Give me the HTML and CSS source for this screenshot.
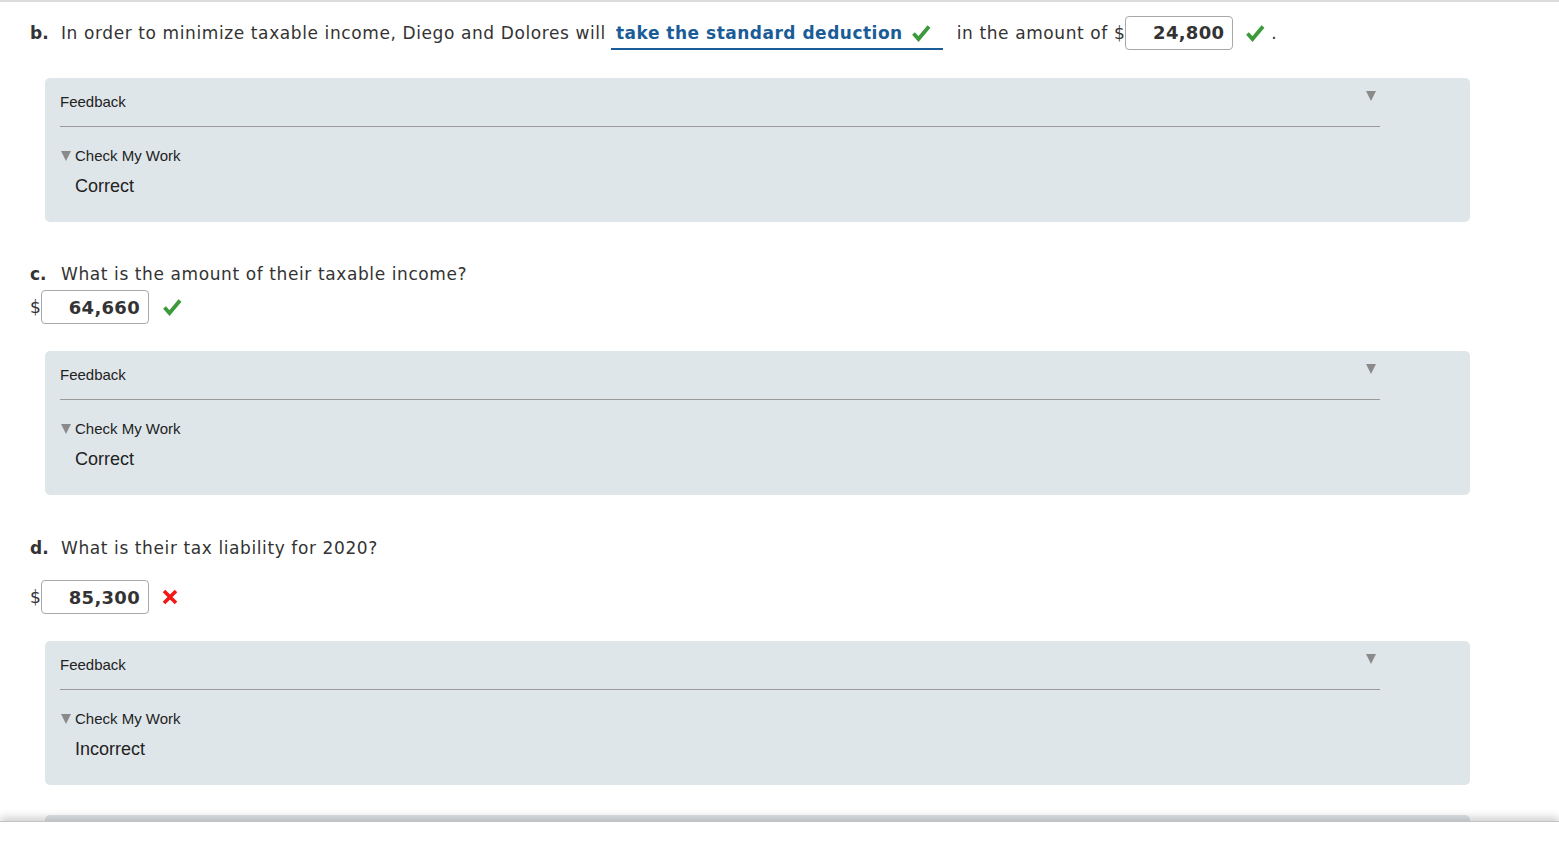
FILE: index.html
```html
<!DOCTYPE html>
<html>
<head>
<meta charset="utf-8">
<link rel="stylesheet" href="styles.css">
</head>
<body>
<div class="page">
  <div class="q q-b">
    <span class="lbl">b.</span><span class="qt">In order to minimize taxable income, Diego and Dolores will</span>
    <span class="select">take the standard deduction
      <svg class="chk" viewBox="0 0 20 20" width="20" height="20"><path d="M2.5 10.5 L7.5 16 L18 3.5" fill="none" stroke="#3d9a3c" stroke-width="3.8"/></svg>
    </span>
    <span class="qt after">in the amount of $</span><span class="inp">24,800</span>
    <svg class="chk mark" viewBox="0 0 20 20" width="20" height="20"><path d="M2.5 10.5 L7.5 16 L18 3.5" fill="none" stroke="#3d9a3c" stroke-width="3.8"/></svg><span class="dot">.</span>
  </div>

  <div class="panel">
    <div class="fb-head">Feedback<span class="tri-r"></span></div>
    <div class="cmw"><span class="tri"></span>Check My Work</div>
    <div class="res">Correct</div>
  </div>

  <div class="q q-c">
    <span class="lbl">c.</span><span class="qt">What is the amount of their taxable income?</span>
  </div>
  <div class="ans ans-c">
    <span class="dollar">$</span><span class="inp">64,660</span>
    <svg class="chk mark" viewBox="0 0 20 20" width="20" height="20"><path d="M2.5 10.5 L7.5 16 L18 3.5" fill="none" stroke="#3d9a3c" stroke-width="3.8"/></svg>
  </div>

  <div class="panel">
    <div class="fb-head">Feedback<span class="tri-r"></span></div>
    <div class="cmw"><span class="tri"></span>Check My Work</div>
    <div class="res">Correct</div>
  </div>

  <div class="q q-d">
    <span class="lbl">d.</span><span class="qt">What is their tax liability for 2020?</span>
  </div>
  <div class="ans ans-d">
    <span class="dollar">$</span><span class="inp">85,300</span>
    <svg class="xmark" viewBox="0 0 16 16" width="16" height="16"><path d="M2 2 L14 14 M14 2 L2 14" fill="none" stroke="#f51616" stroke-width="3.6"/></svg>
  </div>

  <div class="panel">
    <div class="fb-head">Feedback<span class="tri-r"></span></div>
    <div class="cmw"><span class="tri"></span>Check My Work</div>
    <div class="res">Incorrect</div>
  </div>

  <div class="panel panel-next"></div>
</div>
<div class="footer"></div>
</body>
</html>
```
FILE: styles.css
```css
html, body {
  margin: 0;
  padding: 0;
  background: #fff;
  overflow: hidden;
}
body {
  border-top: 2px solid #dcdcdc;
  height: 846px;
  font-family: "DejaVu Sans", Verdana, sans-serif;
  color: #333;
}
.page {
  padding: 14px 0 0 30px;
}
.q {
  display: flex;
  align-items: center;
  height: 20px;
  font-size: 17px;
  line-height: 20px;
  letter-spacing: 0.6px;
  color: #333;
  white-space: nowrap;
  padding-top: 1px;
}
.q-b {
  height: 34px;
  padding-top: 0;
}
.lbl {
  font-weight: bold;
  width: 31px;
  flex: none;
  letter-spacing: 0;
}
.select {
  display: inline-flex;
  align-items: center;
  margin-left: 5px;
  padding: 2px 12px 0 5px;
  height: 34px;
  border-bottom: 2px solid #1a5c97;
  box-sizing: border-box;
  color: #1a5c97;
  font-weight: bold;
  letter-spacing: 0.5px;
}
.select .chk {
  margin-left: 8px;
}
.after {
  margin-left: 14px;
}
.inp {
  display: inline-flex;
  align-items: center;
  justify-content: flex-end;
  box-sizing: border-box;
  width: 108px;
  height: 34px;
  border: 1px solid #a8a8a8;
  border-radius: 4px;
  padding-right: 8px;
  font-size: 18px;
  font-weight: bold;
  letter-spacing: 0.3px;
  color: #333;
  background: #fff;
}
.mark {
  margin-left: 12px;
}
.dot {
  margin-left: 6px;
}
.panel {
  margin: 28px 0 0 15px;
  width: 1425px;
  height: 144px;
  box-sizing: border-box;
  background: #dfe6ea;
  border-radius: 5px;
  font-family: "Liberation Sans", Arial, sans-serif;
  color: #222;
  padding-top: 15px;
}
.fb-head {
  position: relative;
  margin-left: 15px;
  width: 1320px;
  height: 34px;
  box-sizing: border-box;
  font-size: 15px;
  line-height: 18px;
  border-bottom: 1px solid #9a9a9a;
}
.tri-r {
  position: absolute;
  right: 4px;
  top: -2px;
  width: 0;
  height: 0;
  border-left: 5px solid transparent;
  border-right: 5px solid transparent;
  border-top: 10px solid #8a8a8a;
}
.cmw {
  display: flex;
  align-items: center;
  margin: 20px 0 0 16px;
  font-size: 15px;
  line-height: 18px;
}
.tri {
  width: 0;
  height: 0;
  border-left: 5px solid transparent;
  border-right: 5px solid transparent;
  border-top: 10px solid #8a8a8a;
  margin-right: 4px;
}
.res {
  margin: 11px 0 0 30px;
  font-size: 18px;
  line-height: 20px;
}
.q-c {
  margin-top: 41px;
}
.q-d {
  margin-top: 42px;
}
.ans {
  display: flex;
  align-items: center;
  font-size: 17px;
  height: 34px;
}
.ans-c {
  margin-top: 6px;
}
.ans-d {
  margin-top: 22px;
}
.dollar {
  width: 11px;
  color: #333;
}
.ans .mark {
  margin-left: 13px;
}
.xmark {
  margin-left: 13px;
}
.ans + .panel {
  margin-top: 27px;
}
.panel-next {
  margin-top: 30px;
}
.footer {
  position: fixed;
  left: 0;
  right: 0;
  bottom: 0;
  height: 26px;
  background: #fff;
  border-top: 1px solid #c4c4c4;
  box-shadow: 0 -4px 8px rgba(0, 0, 0, 0.18);
}
```
